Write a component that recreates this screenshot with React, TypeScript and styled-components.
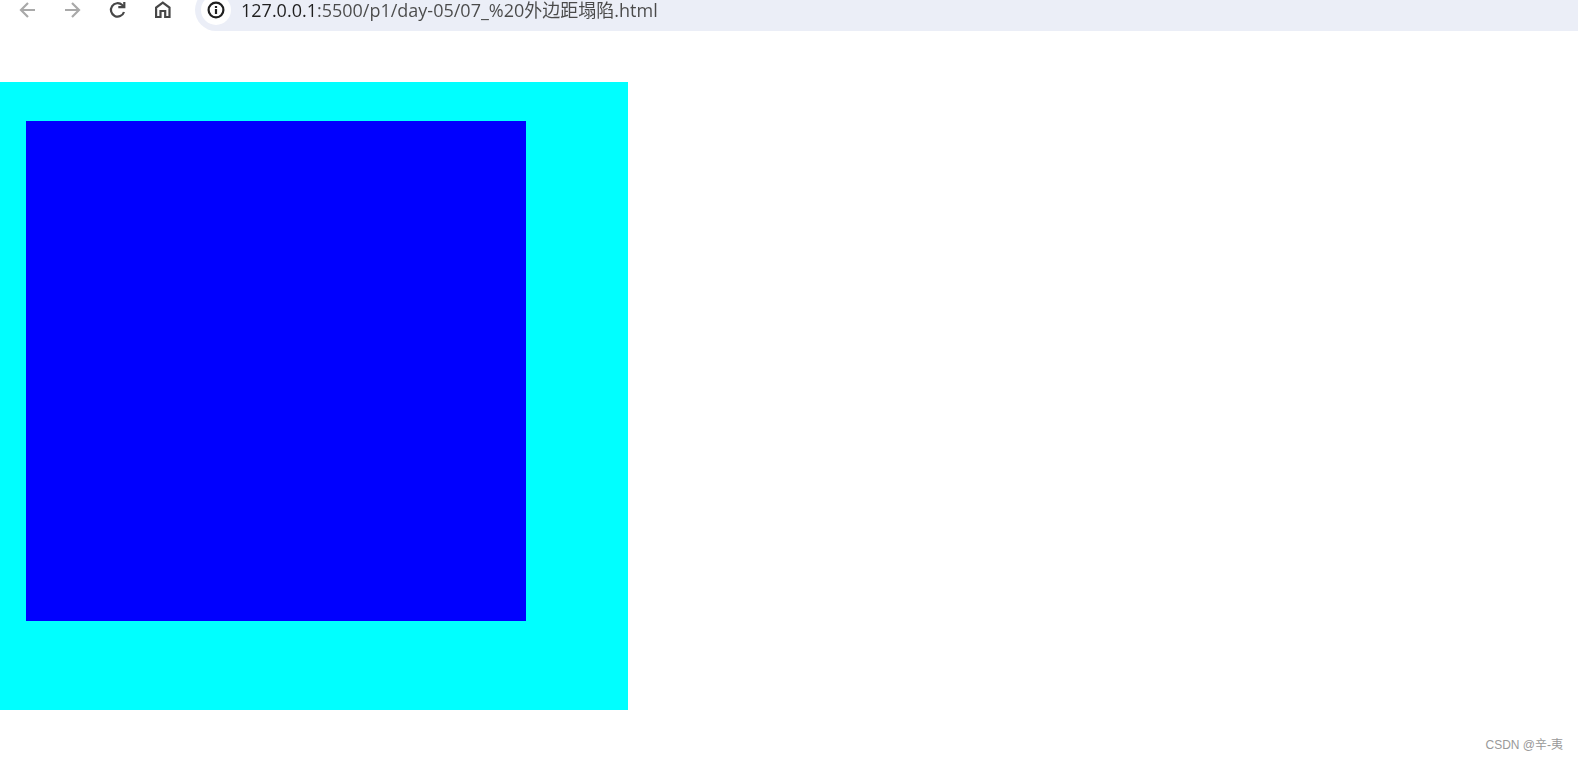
import React, { useState } from "react";
import styled, { createGlobalStyle } from "styled-components";

const GlobalStyle = createGlobalStyle`
  *, *::before, *::after { box-sizing: border-box; }
  body { margin: 0; background: #fff; }
`;

const Page = styled.div`
  display: flex;
  flex-direction: column;
  min-height: 100vh;
  font-family: "Open Sans", "Noto Sans CJK SC", sans-serif;
`;

const Toolbar = styled.header`
  display: flex;
  align-items: flex-end;
  height: 31px;
  overflow: hidden;
`;

const NavButtons = styled.nav`
  display: flex;
  flex: none;
  align-items: center;
  gap: 21px;
  height: 42px;
  padding: 0 20px 0 16px;
`;

const NavButton = styled.button<{ $muted?: boolean }>`
  display: grid;
  place-items: center;
  width: 24px;
  height: 24px;
  padding: 0;
  border: 0;
  background: none;
  color: ${({ $muted }) => ($muted ? "#a9a9a9" : "#474747")};
`;

const AddressBar = styled.div`
  display: flex;
  flex: 1;
  align-items: center;
  gap: 10px;
  height: 42px;
  padding-left: 6px;
  border-radius: 21px 0 0 21px;
  background: #ebeef7;
`;

const SiteInfo = styled.button`
  display: grid;
  flex: none;
  place-items: center;
  width: 30px;
  height: 30px;
  padding: 0;
  border: 0;
  border-radius: 50%;
  background: #fff;
  color: #1f1f1f;
`;

/* The host is darker than the rest of the address. */
const AddressInput = styled.input`
  flex: 1;
  min-width: 0;
  height: 30px;
  padding: 0;
  border: 0;
  outline: 0;
  background: linear-gradient(to right, #1f1f1f 74px, #4a4a4a 74px);
  background-clip: text;
  -webkit-background-clip: text;
  color: transparent;
  font-family: inherit;
  font-size: 18px;
  line-height: 30px;
`;

const Content = styled.main`
  padding-top: 51px;
`;

const Outer = styled.div`
  width: 628px;
  height: 628px;
  padding: 39px 26px;
  background: #00ffff;
`;

const Inner = styled.div`
  width: 500px;
  height: 500px;
  background: #0000ff;
`;

const Watermark = styled.footer`
  margin-top: auto;
  padding: 0 15px 6px;
  color: #999;
  font-family: "Liberation Sans", "Noto Sans CJK SC", sans-serif;
  font-size: 12px;
  line-height: 18px;
  text-align: right;
`;

const Stroke = ({ children }: { children: React.ReactNode }) => (
  <svg width="24" height="24" viewBox="0 0 24 24" fill="none" stroke="currentColor" strokeWidth="2.2" aria-hidden="true">
    {children}
  </svg>
);

export default function App() {
  const [address, setAddress] = useState("127.0.0.1:5500/p1/day-05/07_%20外边距塌陷.html");
  return (
    <Page>
      <GlobalStyle />
      <Toolbar>
        <NavButtons aria-label="Browser">
          <NavButton $muted type="button" aria-label="Back">
            <Stroke><path d="M19 12H5.5M12 5l-7 7 7 7" /></Stroke>
          </NavButton>
          <NavButton $muted type="button" aria-label="Forward">
            <Stroke><path d="M4 12h13.5M11 5l7 7-7 7" /></Stroke>
          </NavButton>
          <NavButton type="button" aria-label="Reload">
            <Stroke>
              <path d="M18 14A6.7 6.7 0 1 1 16.2 7L18 8.8" />
              <path d="M18.300 4v5.200h-6" />
            </Stroke>
          </NavButton>
          <NavButton type="button" aria-label="Home">
            <Stroke><path d="M5.100 19V9.500L11.800 4.500l6.700 5V19H14.200v-6H9.500v6z" /></Stroke>
          </NavButton>
        </NavButtons>
        <AddressBar>
          <SiteInfo type="button" aria-label="Site information">
            <Stroke>
              <circle cx="12" cy="12" r="7.4" />
              <path d="M12 11v5M12 8v2" />
            </Stroke>
          </SiteInfo>
          <AddressInput
            type="text"
            aria-label="Address"
            spellCheck={false}
            value={address}
            onChange={(e) => setAddress(e.target.value)}
          />
        </AddressBar>
      </Toolbar>
      <Content>
        <Outer>
          <Inner />
        </Outer>
      </Content>
      <Watermark>CSDN @辛-夷</Watermark>
    </Page>
  );
}
